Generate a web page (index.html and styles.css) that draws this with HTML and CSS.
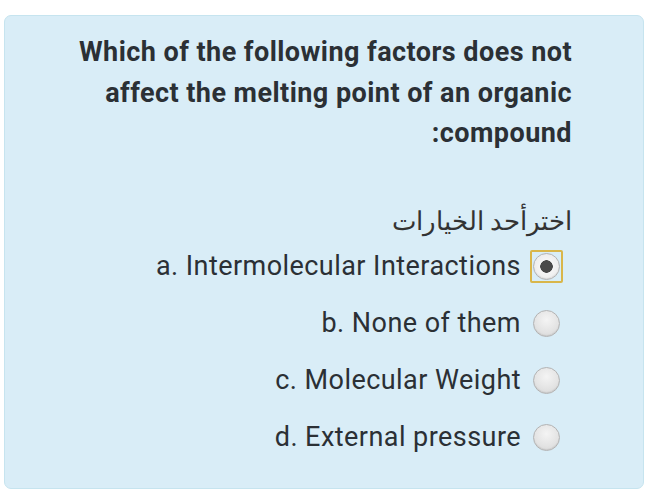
FILE: index.html
```html
<!DOCTYPE html>
<html lang="ar">
<head>
<meta charset="utf-8">
<link rel="stylesheet" href="styles.css">
</head>
<body>
<div class="que" dir="rtl">
  <div class="qtext">Which of the following factors does not affect the melting point of an organic compound:</div>
  <div class="prompt">اخترأحد الخيارات</div>
  <div class="answer">
    <label class="opt"><span class="radio checked"><span class="focus"></span></span><span class="txt" dir="ltr">a. Intermolecular Interactions</span></label>
    <label class="opt"><span class="radio"></span><span class="txt" dir="ltr">b. None of them</span></label>
    <label class="opt"><span class="radio"></span><span class="txt" dir="ltr">c. Molecular Weight</span></label>
    <label class="opt"><span class="radio"></span><span class="txt" dir="ltr">d. External pressure</span></label>
  </div>
</div>
</body>
</html>
```
FILE: styles.css
```css
html, body {
  margin: 0;
  padding: 0;
  background: #ffffff;
}
body {
  padding: 15px 5px 6px 4px;
  font-family: Roboto, "Noto Sans", sans-serif;
  color: #2b3035;
}
.que {
  box-sizing: border-box;
  height: 474px;
  background: #d9edf7;
  border: 1px solid #c6e4ef;
  border-radius: 7px;
  padding: 16px 71px 0 20px;
  text-align: right;
}
.qtext {
  font-weight: 700;
  font-size: 27px;
  letter-spacing: 0.45px;
  line-height: 40.5px;
  padding-left: 40px;
}
.prompt {
  margin-top: 49px;
  font-size: 26px;
  line-height: 36px;
  color: #333;
}
.answer {
  display: flex;
  flex-direction: column;
  align-items: flex-start;
  margin-top: -1px;
}
.opt {
  display: flex;
  align-items: center;
  gap: 12px;
  height: 57px;
  margin-right: 12px;
}
.txt {
  font-size: 27px;
  letter-spacing: 0.45px;
  color: #2b3035;
}
.radio {
  position: relative;
  width: 25px;
  height: 25px;
  border-radius: 50%;
  border: 1px solid #b3b3b3;
  background: radial-gradient(circle at 50% 35%, #f4f4f4 0%, #e3e3e3 60%, #d4d4d4 100%);
  box-shadow: inset 0 -1px 1px rgba(0,0,0,0.08);
}
.radio.checked {
  background: radial-gradient(circle, #4a4a4a 0 6px, #f5f5f5 6.5px, #e6e6e6 100%);
}
.focus {
  position: absolute;
  left: -4px;
  top: -4px;
  width: 33px;
  height: 33px;
  border: 2px solid #d9b64a;
  border-radius: 2px;
  box-sizing: border-box;
}
```
